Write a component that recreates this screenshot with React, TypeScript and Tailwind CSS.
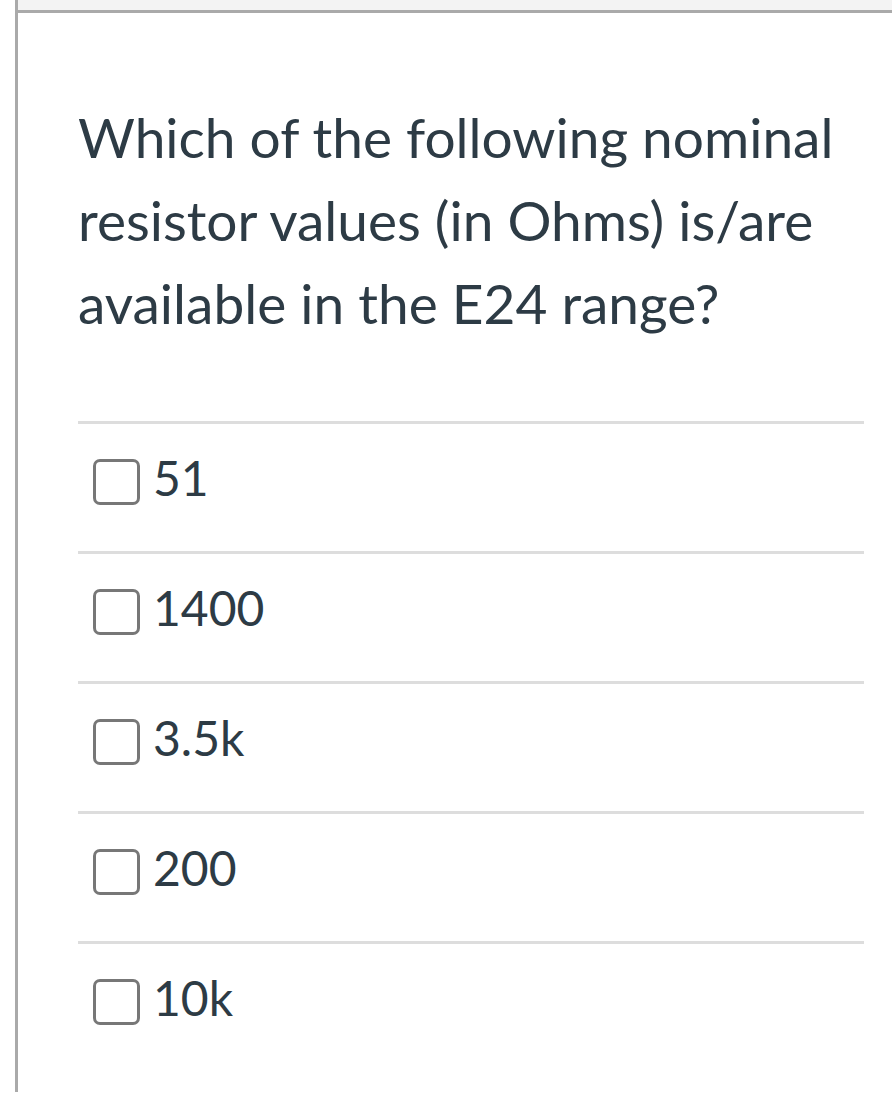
const options = ["51", "1400", "3.5k", "200", "10k"];

export default function App() {
  return (
    <div className="h-[1093px] w-[892px] overflow-hidden bg-white font-['Lato',sans-serif] text-[#2d3b45]">
      <div className="ml-[15px] h-[1092px] border-l-[3px] border-[#aaaaaa]">
        <div className="h-[10px] bg-[#f3f3f3]" />
        <div className="border-t-[3px] border-[#aaaaaa] pl-[60px] pr-[28px] pt-[83px]">
          <h1 className="text-[55px] font-normal leading-[83px]">
            Which of the following nominal resistor values (in Ohms) is/are available in the E24 range?
          </h1>
          <div className="mt-[76px]">
            {options.map((o) => (
              <label
                key={o}
                className="flex h-[130px] items-start gap-[13px] border-t-[3px] border-[#dddddd] pl-[15px] pt-[30px]"
              >
                <span className="mt-[5px] block h-[46px] w-[47px] shrink-0 rounded-[7px] border-[3px] border-[#777777] bg-white" />
                <span className="text-[48px] leading-[47px]">{o}</span>
              </label>
            ))}
          </div>
        </div>
      </div>
    </div>
  );
}
